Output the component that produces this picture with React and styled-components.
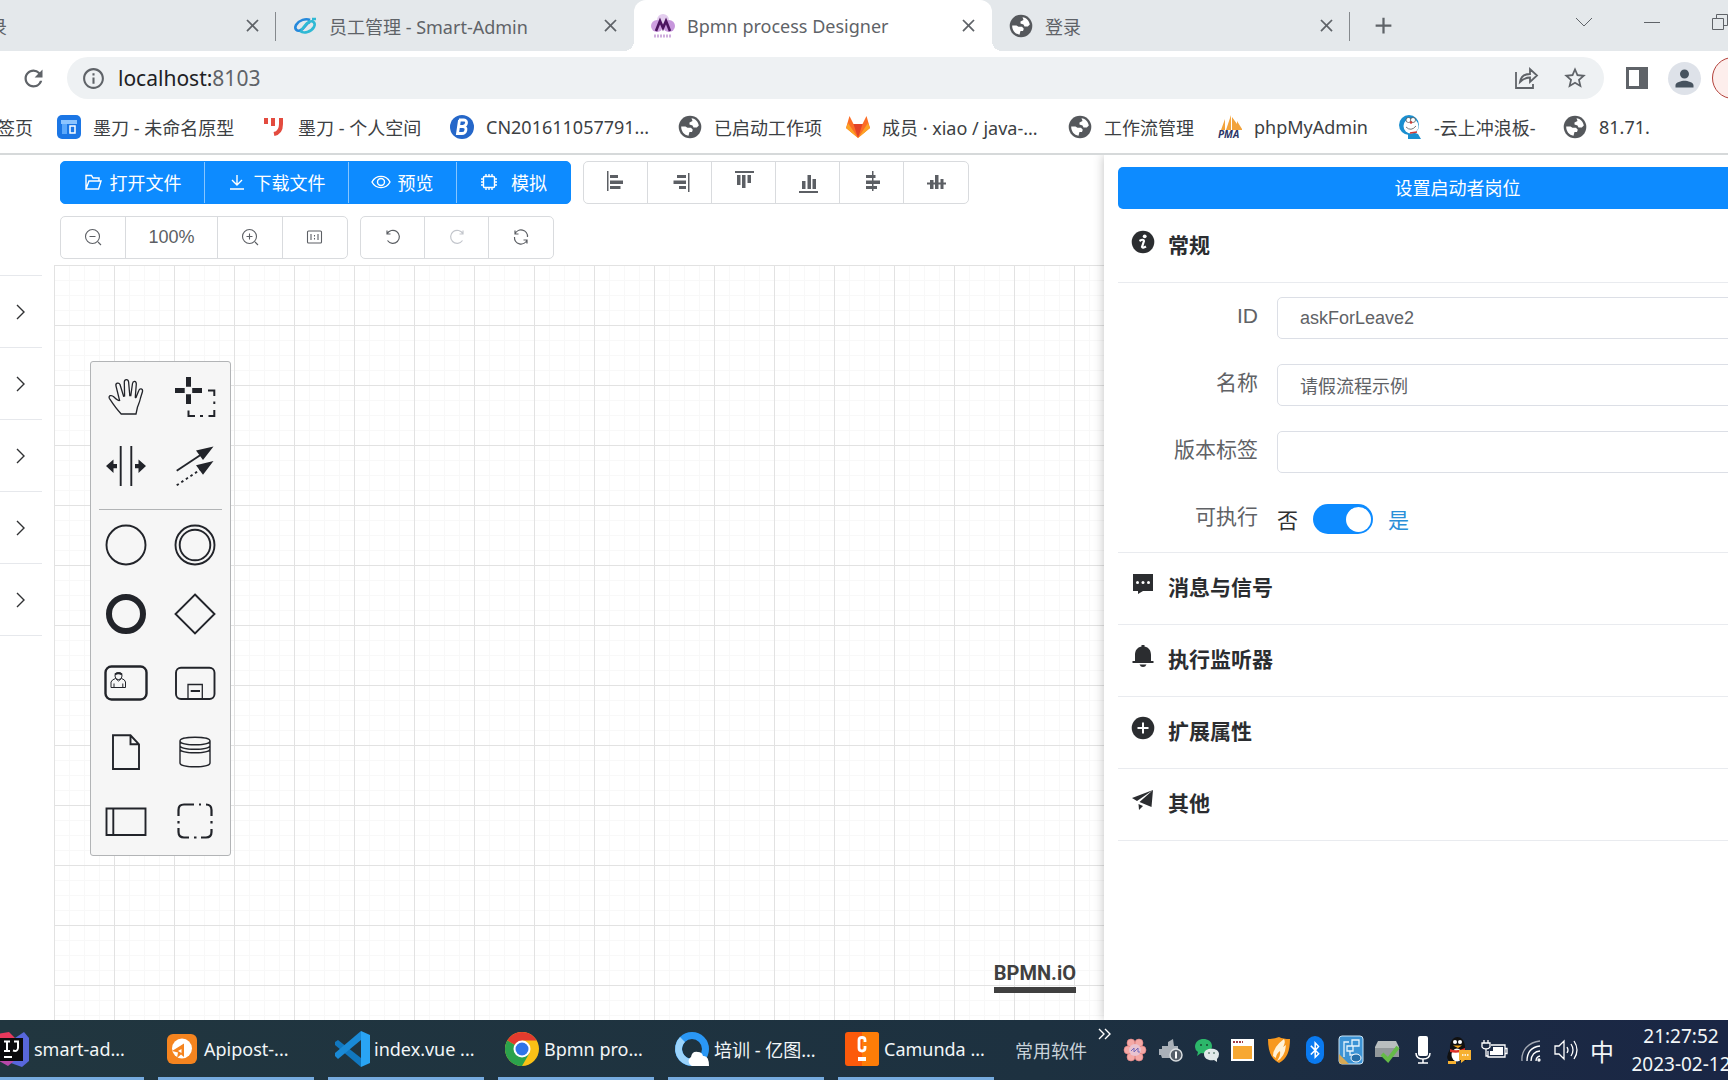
import React from "react";
import styled, { createGlobalStyle, css } from "styled-components";
import { MdAdd, MdClose, MdInfoOutline, MdPerson, MdRefresh, MdStarBorder } from "react-icons/md";
import { FaBluetoothB } from "react-icons/fa";

const blue = "#0d8bff";
const ink = "#22242a";

const GlobalStyle = createGlobalStyle`
    * {
        box-sizing: border-box;
    }

    body {
        margin: 0;
        background: #fff;
        overflow: hidden;
        font-family: "Noto Sans", "Noto Sans CJK SC", sans-serif;
        font-size: 18px;
    }

    button, input {
        font: inherit;
    }

    svg {
        display: block;
        flex: none;
        overflow: visible;
    }
`;

const Screen = styled.div`
    display: flex;
    flex-direction: column;
    height: 100vh;
    overflow: hidden;
`;

/* ---------- browser ---------- */

const TabStrip = styled.div`
    display: flex;
    flex: none;
    height: 51px;
    background: #e4e8eb;
    overflow: hidden;
`;

const Tabs = styled.div`
    display: flex;
    flex: none;
    margin-left: -82px;
`;

const Tab = styled.div`
    position: relative;
    display: flex;
    align-items: center;
    gap: 12px;
    width: 358px;
    padding: 0 13px 0 17px;
    color: #5f6368;
    background: ${(p) => (p.$active ? "#fff" : "transparent")};
    border-radius: 12px 12px 0 0;

    ${(p) =>
        p.$line &&
        css`
            &::after {
                content: "";
                position: absolute;
                right: 0;
                top: 12px;
                width: 1px;
                height: 29px;
                background: #85898d;
            }
        `}

    ${(p) =>
        p.$active &&
        css`
            &::before,
            &::after {
                content: "";
                position: absolute;
                bottom: 0;
                width: 10px;
                height: 10px;
            }
            &::before {
                left: -10px;
                background: radial-gradient(circle at 0 0, transparent 10px, #fff 10px);
            }
            &::after {
                right: -10px;
                background: radial-gradient(circle at 100% 0, transparent 10px, #fff 10px);
            }
        `}
`;

const TabTitle = styled.span`
    flex: 1;
    white-space: nowrap;
    overflow: hidden;
`;

const PlainButton = styled.button`
    display: flex;
    align-items: center;
    justify-content: center;
    padding: 0;
    border: 0;
    background: none;
    color: #5f6368;
`;

const NewTab = styled(PlainButton)`
    width: 66px;
`;

const WindowButtons = styled.div`
    display: flex;
    gap: 52px;
    margin-left: auto;
    padding-bottom: 8px;
    margin-right: 0;
`;

const AddressRow = styled.div`
    display: flex;
    align-items: center;
    flex: none;
    height: 54px;
    padding-left: 20px;
    overflow: hidden;
`;

const AddressBar = styled.div`
    display: flex;
    flex: 1;
    align-items: center;
    gap: 12px;
    height: 42px;
    margin: 0 22px 0 20px;
    padding: 0 16px 0 14px;
    border-radius: 21px;
    background: #eef1f3;
    color: #5f6368;
`;

const Url = styled.div`
    flex: 1;
    font-size: 21px;

    b {
        font-weight: 400;
        color: #202124;
    }
`;

const AddressActions = styled.div`
    display: flex;
    gap: 24px;
`;

const Avatar = styled(PlainButton)`
    width: 33px;
    height: 33px;
    margin: 0 11px 0 20px;
    border-radius: 50%;
    background: #dee2e9;
    color: #47535f;
`;

const UpdateButton = styled.button`
    width: 120px;
    height: 42px;
    margin-right: -104px;
    border: 1px solid #b3403a;
    border-radius: 21px;
    background: #fdeeec;
`;

const Bookmarks = styled.nav`
    display: flex;
    align-items: center;
    flex: none;
    height: 48px;
    padding-bottom: 4px;
    overflow: hidden;
`;

const Bookmark = styled.a`
    display: flex;
    align-items: center;
    gap: 12px;
    flex: none;
    width: ${(p) => p.$width}px;
    color: #3c4043;
    text-decoration: none;
    white-space: nowrap;

    &:first-child {
        justify-content: flex-end;
        padding-right: 24px;
        margin-left: -60px;
    }
`;

/* ---------- designer ---------- */

const Page = styled.main`
    display: flex;
    flex: 1;
    min-height: 0;
    border-top: 2px solid #d6d9da;
    font-family: "Liberation Sans", "Noto Sans CJK SC", sans-serif;
    overflow: hidden;
`;

const SideMenu = styled.aside`
    flex: none;
    width: 42px;
    margin-right: 12px;
    padding-top: 120px;
`;

const SideItem = styled.button`
    display: flex;
    align-items: center;
    justify-content: center;
    width: 100%;
    height: 72px;
    padding: 0;
    border: 0;
    border-top: 1px solid #e6e8ec;
    background: none;
    color: #303133;

    &:last-child {
        height: 73px;
        border-bottom: 1px solid #e6e8ec;
    }
`;

const Designer = styled.section`
    display: flex;
    flex-direction: column;
    flex: 1;
    min-width: 0;
`;

const Toolbar = styled.div`
    display: grid;
    gap: 12px;
    padding: 6px 0 6px 6px;
`;

const ToolRow = styled.div`
    display: flex;
    gap: 12px;
`;

const ButtonGroup = styled.div`
    display: flex;
    height: 43px;
    border: 1px solid ${(p) => (p.$primary ? blue : "#d9dbde")};
    border-radius: 5px;
    background: ${(p) => (p.$primary ? blue : "#fff")};
    overflow: hidden;
`;

const ToolButton = styled.button`
    display: flex;
    align-items: center;
    justify-content: center;
    gap: ${(p) => p.$gap || 8}px;
    width: ${(p) => p.$width || 65}px;
    padding: 0 0 1px;
    border: 0;
    border-right: 1px solid ${(p) => (p.$primary ? "#86c5ff" : "#d9dbde")};
    background: none;
    color: ${(p) => (p.$primary ? "#fff" : "#5c5f64")};

    &:last-child {
        border-right: 0;
    }

    &:disabled {
        color: #c3c6cc;
    }
`;

const Canvas = styled.div`
    position: relative;
    flex: 1;
    background-image: linear-gradient(#e2e2e2 1px, transparent 1px),
        linear-gradient(90deg, #e2e2e2 1px, transparent 1px),
        linear-gradient(#f8f8f8 1px, transparent 1px),
        linear-gradient(90deg, #f8f8f8 1px, transparent 1px);
    background-size: 60px 60px, 60px 60px, 15px 15px, 15px 15px;
`;

const Palette = styled.div`
    position: absolute;
    left: 36px;
    top: 96px;
    border: 1px solid #b2b4b6;
    border-radius: 3px;
    background: #f6f6f6;
`;

const PaletteGroup = styled.div`
    display: grid;
    grid-template-columns: 69px 70px;
    grid-auto-rows: 69px;
`;

const PaletteTool = styled(PlainButton)`
    color: ${ink};
`;

const PaletteLine = styled.hr`
    height: 1px;
    margin: 9px 8px 0;
    border: 0;
    background: #b2b4b6;
`;

const BpmnLogo = styled.a`
    position: absolute;
    right: 28px;
    bottom: 27px;
    border-bottom: 6px solid #404040;
    color: #404040;
    font: bold 20px/28px "Liberation Sans Narrow", "Roboto", sans-serif;
    text-decoration: none;
`;

const Panel = styled.aside`
    position: relative;
    flex: none;
    width: 624px;
    padding: 12px 0 0 14px;
    background: #fff;
    box-shadow: 0 0 10px rgba(0, 0, 0, 0.25);
`;

/* the panel runs on past the right edge of the window */
const PanelBody = styled.div`
    margin-right: -69px;
`;

const StarterButton = styled.button`
    display: block;
    width: 100%;
    height: 42px;
    margin-bottom: 2px;
    padding: 0 0 2px;
    border: 0;
    border-radius: 5px;
    background: ${blue};
    color: #fff;
`;

const SectionHead = styled.button`
    display: flex;
    align-items: center;
    gap: 13px;
    width: 100%;
    height: 72px;
    padding: 0 13px 5px;
    border: 0;
    border-bottom: 1px solid #e9ebef;
    background: none;
    color: #2b2d30;
    font-size: 21px;
    font-weight: 700;

    svg {
        margin-bottom: 4px;
    }
`;

const Fields = styled.div`
    display: grid;
    gap: 25px;
    padding: 14px 0 12px;
    border-bottom: 1px solid #e9ebef;
`;

const Field = styled.div`
    display: grid;
    grid-template-columns: 140px 1fr;
    align-items: center;
    gap: 19px;
    height: 42px;
    color: #606266;
`;

const FieldLabel = styled.label`
    padding-bottom: 4px;
    text-align: right;
    font-size: 21px;
    line-height: 38px;
`;

const TextInput = styled.input`
    width: 100%;
    height: 42px;
    padding: 0 22px;
    border: 1px solid #dcdfe6;
    border-radius: 5px;
    color: #606266;
`;

const SwitchRow = styled.div`
    display: flex;
    align-items: center;
    gap: 15px;
    font-size: 21px;
    color: #303133;

    em {
        font-style: normal;
        color: #2a8fd8;
    }
`;

const Switch = styled.input`
    appearance: none;
    display: flex;
    align-items: center;
    width: 60px;
    height: 30px;
    margin: 0;
    padding: 0 2px;
    border-radius: 15px;
    background: ${blue};

    &::after {
        content: "";
        width: 25px;
        height: 25px;
        margin-left: auto;
        border-radius: 50%;
        background: #fff;
    }
`;

/* ---------- taskbar ---------- */

const Taskbar = styled.footer`
    display: flex;
    flex: none;
    height: 60px;
    background: linear-gradient(90deg, #21363f, #1d3140 60%, #1a2645);
    color: #f2f6f8;
    overflow: hidden;
`;

const TaskList = styled.div`
    display: flex;
    gap: 14px;
    margin-left: -12px;
`;

const Task = styled.button`
    display: flex;
    align-items: center;
    gap: 4px;
    width: 156px;
    padding: 0 0 0 6px;
    border: 0;
    border-bottom: 3px solid #76abdf;
    background: none;
    color: inherit;
    white-space: nowrap;
`;

const Software = styled.div`
    display: flex;
    align-items: center;
    gap: 12px;
    margin-left: 21px;
    color: #c9d3da;

    svg {
        margin-bottom: 32px;
    }
`;

const Tray = styled.div`
    display: flex;
    align-items: center;
    gap: 10px;
    margin-left: auto;
`;

const Ime = styled.span`
    width: 24px;
    font-size: 24px;
    text-align: center;
`;

const Clock = styled.time`
    width: 114px;
    margin-right: -10px;
    text-align: center;
    font-size: 19px;
    line-height: 28px;
    white-space: nowrap;
`;

const Icon = ({ size = 24, box = size, children, ...rest }) => (
    <svg width={size} height={size} viewBox={`0 0 ${box} ${box}`} fill="none" {...rest}>
        {children}
    </svg>
);

const Line = (props) => <Icon stroke="currentColor" strokeWidth="1.4" {...props} />;

/* favicons */

const AdminMark = () => (
    <Icon strokeWidth="2.6">
        <path
            d="M17 6C13 4 6 6 3 11C1 15 4 18 8 16C12 14 13 9 17 8"
            stroke="#2589dc"
        />
        <path
            d="M7 17C11 20 18 18 21 13C23 9 20 6 16 8C12 10 11 14 8 16M19 5L23 5"
            stroke="#2fb9d4"
        />
    </Icon>
);

const PurpleMark = () => (
    <Icon>
        <circle cx="12" cy="6" r="6" fill="#e3cdee" />
        <circle cx="6" cy="12" r="6" fill="#cfa0e0" />
        <circle cx="18" cy="12" r="6" fill="#c796dc" />
        <path d="M5 17L9 7L12 14L15 7L19 17" stroke="#4c145f" strokeWidth="2.6" />
        <path d="M3 22H21" stroke="#cfaedd" strokeWidth="3" strokeDasharray="2 1" />
    </Icon>
);

const ModaoApp = () => (
    <Icon>
        <rect width="24" height="24" rx="5" fill="#1b76e5" />
        <path d="M4 5H20V9H4Z" fill="#8cc4ff" />
        <path d="M5 9H10V19H5Z" fill="#5ba8fb" />
        <path d="M13 11H18V18H13Z" stroke="#fff" strokeWidth="1.5" />
    </Icon>
);

const ModaoRed = () => (
    <Icon stroke="#e34b3f" strokeWidth="4">
        <path d="M4 3V9M11 3V11M19 3V9C19 15 17 18 12 19" />
    </Icon>
);

const BlueB = () => (
    <Icon>
        <circle cx="12" cy="12" r="12" fill="#2567c9" />
        <path
            d="M9 5H14C18 5 17 11 13 11.5H9M13 11.5C18 12 16 18.5 12 18.5H7.5L9.5 5"
            stroke="#fff"
            strokeWidth="2.8"
        />
    </Icon>
);

const Gitlab = () => (
    <Icon>
        <path d="M12 23L0 13L3.5 1L7.5 9H16.5L20.5 1L24 13Z" fill="#fc6d26" />
        <path d="M12 23L7.5 9H16.5Z" fill="#e24329" />
        <path d="M0 13L2 8L12 23ZM24 13L22 8L12 23Z" fill="#fca326" />
    </Icon>
);

const Pma = () => (
    <Icon>
        <path d="M3 15L7 4V15ZM8 15L13 0V15ZM14 15V2L19 9V15ZM19 15V6L24 14V15Z" fill="#f2a33c" />
        <text x="0" y="23" fontSize="10" fontWeight="700" fontStyle="italic" fill="#2b3567">
            PMA
        </text>
    </Icon>
);

const Doraemon = () => (
    <Icon>
        <circle cx="11" cy="10" r="10" fill="#1a8fd0" />
        <path d="M10 19Q14 16 20 19L23 24H10Z" fill="#1a8fd0" />
        <circle cx="13" cy="11" r="7.5" fill="#fff" />
        <circle cx="10.500" cy="5" r="2.5" fill="#fff" stroke="#333" strokeWidth=".6" />
        <circle cx="15" cy="5" r="2.5" fill="#fff" stroke="#333" strokeWidth=".6" />
        <circle cx="13" cy="7.5" r="1.3" fill="#d23b34" />
        <path d="M8 12Q13 17 18 11" stroke="#555" strokeWidth=".8" />
        <path d="M12 18L19 17" stroke="#d23b34" strokeWidth="1.5" />
    </Icon>
);

const Globe = () => (
    <Icon>
        <circle cx="12" cy="12" r="11.3" fill="#55585c" />
        <path
            d="M13.5 3.2C17.5 3.8 20.3 6.8 20.8 10.6L18.8 12.5H15.5L14.5 10.5L11.5 9.5V7.5L14.5 6Z"
            fill="#fff"
        />
        <path
            d="M3.2 11.5H7.5L9.5 12.8H13L14.8 14.8L14 17H11.5L10.5 20.7C6.2 20 3 16.300 3.2 11.5Z"
            fill="#fff"
        />
    </Icon>
);

const ShareIcon = () => (
    <Line strokeWidth="1.8">
        <path d="M2 6V22H19V18M6 16C7 10 11 8 16 8V3L23 9.500L16 16V11.500C11 11.500 9 13 6 16Z" />
    </Line>
);

const tabs = [
    { title: "登录", icon: <Globe />, line: true },
    { title: "员工管理 - Smart-Admin", icon: <AdminMark /> },
    { title: "Bpmn process Designer", icon: <PurpleMark />, active: true },
    { title: "登录", icon: <Globe />, line: true },
];

const bookmarks = [
    { title: "新标签页", width: 117 },
    { title: "墨刀 - 未命名原型", icon: <ModaoApp />, width: 205 },
    { title: "墨刀 - 个人空间", icon: <ModaoRed />, width: 188 },
    { title: "CN201611057791...", icon: <BlueB />, width: 228 },
    { title: "已启动工作项", icon: <Globe />, width: 168 },
    { title: "成员 · xiao / java-...", icon: <Gitlab />, width: 222 },
    { title: "工作流管理", icon: <Globe />, width: 150 },
    { title: "phpMyAdmin", icon: <Pma />, width: 180 },
    { title: "-云上冲浪板-", icon: <Doraemon />, width: 165 },
    { title: "81.71.", icon: <Globe />, width: 120 },
];

/* toolbar */

const FolderIcon = () => (
    <Line size={18}>
        <path d="M2 16V2.500H7.500L9 5H15V8M2 16L5 8H17L14.500 16Z" />
    </Line>
);

const DownloadIcon = () => (
    <Line size={18}>
        <path d="M9 2V12M4 7L9 12L14 7M2 16H16" />
    </Line>
);

const EyeIcon = () => (
    <Line size={18}>
        <path d="M0 9C4 1.500 14 1.500 18 9C14 16.500 4 16.500 0 9Z" />
        <circle cx="9" cy="9" r="3.5" />
    </Line>
);

const ChipIcon = () => (
    <Line size={18}>
        <rect x="3.5" y="3.5" width="11" height="11" rx="1" />
        <path d="M6 1V3M9 1V3M12 1V3M6 15V17M9 15V17M12 15V17M1 6H3M1 9H3M1 12H3M15 6H17M15 9H17M15 12H17" />
    </Line>
);

const fileActions = [
    { title: "打开文件", icon: <FolderIcon />, width: 144 },
    { title: "下载文件", icon: <DownloadIcon />, width: 144 },
    { title: "预览", icon: <EyeIcon />, width: 108 },
    { title: "模拟", icon: <ChipIcon />, width: 113, gap: 13 },
];

const alignIcons = [
    { title: "向左对齐", d: "M3 1H4.5V21H3ZM6 5H14V8H6ZM6 10.500H19V14H6ZM6 16H16.500V19H6Z" },
    { title: "向右对齐", d: "M20 3H21.500V22H20ZM9 5H18V8H9ZM5.500 10.500H18V14H5.500ZM11 16H18V19H11Z" },
    { title: "向上对齐", d: "M3 1H22V3H3ZM5 5H8.500V15H5ZM10 5H13.500V18H10ZM15.500 5H19V13H15.500Z" },
    { title: "向下对齐", d: "M3 21H22V23H3ZM6 11H9.500V19H6ZM11.500 5H15V19H11.500ZM16.500 9H20V19H16.500Z" },
    { title: "水平居中", d: "M12 1H13.500V21H12ZM6 5H15.500V8H6ZM6 10.500H20V14H6ZM6 16H17V19H6Z" },
    { title: "垂直居中", d: "M3 12.500H22V14.500H3ZM6 10H9.500V19H6ZM11 5H14.500V19H11ZM16.500 9H19.500V19H16.500Z" },
];

const ZoomOutIcon = () => (
    <Line size={18} strokeWidth="1.1">
        <circle cx="8.5" cy="8.5" r="7" />
        <path d="M5.500 8.500H11.500M14 14L17 17" />
    </Line>
);

const ZoomInIcon = () => (
    <Line size={18} strokeWidth="1.1">
        <circle cx="8.5" cy="8.5" r="7" />
        <path d="M5.500 8.500H11.500M8.500 5.500V11.500M14 14L17 17" />
    </Line>
);

const FitIcon = () => (
    <Line size={18} strokeWidth="1.1">
        <rect x="1.5" y="3" width="14" height="12" rx="1" />
        <path d="M5 6V12M12 6V12M8.500 7V8.500M8.500 10V11.500" />
    </Line>
);

const UndoIcon = () => (
    <Line size={18} strokeWidth="1.2">
        <path d="M3 2.500V6H6.500M3 6A6.500 6.500 0 1 1 3.500 12.500" />
    </Line>
);

const RedoIcon = () => (
    <Line size={18} strokeWidth="1.2">
        <path d="M15 2.500V6H11.500M15 6A6.500 6.500 0 1 0 14.500 12.500" />
    </Line>
);

const ResetIcon = () => (
    <Line size={18} strokeWidth="1.2">
        <path d="M3 2.500V6H6.500M3 6A6.500 6.500 0 0 1 15.500 9M15 15.500V12H11.500M15 12A6.500 6.500 0 0 1 2.500 9" />
    </Line>
);

/* palette, every glyph in a 40 x 40 box */

const moveTools = [
    {
        title: "手型工具",
        glyph: (
            <path
                strokeWidth="1.3"
                d="M15.200 37H30L31.500 30C33 26 34 24 34.500 21L36.500 14.500C37 11.500 33.800 10.800 32.800 13.500L30 20.500Q29.200 21 29.300 20L30.300 7C30.300 3.500 27 3.500 26.500 6.500L24.800 18.500H23.800L22.600 5C22.300 1.800 18.500 1.800 18.300 5L18.600 19L17.600 19.200L14 7.500C12.800 5 9.200 6 10 9L13.600 23.500C12 24 10 22 8 20C5.500 17.500 2 18.500 3.400 21.500C6 25.500 9.500 31 15.200 37Z"
            />
        ),
    },
    {
        title: "套索工具",
        glyph: (
            <>
                <path strokeWidth="5" d="M13.500 0V9.700M13.500 17.200V27M0 13.500H9.700M17.200 13.500H27" />
                <path
                    strokeWidth="2"
                    d="M33 13.500H39.300V19M39.300 24.500V27M39.300 33V39H33.500M25 39H28M20 39H13.500V33.500"
                />
            </>
        ),
    },
    {
        title: "空间工具",
        glyph: (
            <>
                <path d="M14.700 0V40M25.300 0V40" />
                <path
                    fill={ink}
                    stroke="none"
                    d="M0 20L7.500 13.500V18H11V22.300H7.500V27ZM40 20L32.500 13.500V18H29V22.300H32.500V27Z"
                />
            </>
        ),
    },
    {
        title: "连接工具",
        glyph: (
            <>
                <path d="M1.700 24.700L27 8" />
                <path strokeDasharray="2.500 3" d="M1.700 39.300L27 22.500" />
                <path
                    fill={ink}
                    stroke="none"
                    d="M38.500 0.500L21 4.500L28 14ZM38.500 15L21 19.200L28 28.700Z"
                />
            </>
        ),
    },
];

const shapeTools = [
    { title: "开始事件", glyph: <circle cx="20" cy="20" r="19.5" /> },
    {
        title: "中间事件",
        glyph: (
            <>
                <circle cx="20" cy="20" r="19.5" />
                <circle cx="20" cy="20" r="15.3" />
            </>
        ),
    },
    { title: "结束事件", glyph: <circle cx="20" cy="20" r="17" strokeWidth="6" /> },
    { title: "网关", glyph: <path d="M20 0.500L39.500 20L20 39.500L0.500 20Z" /> },
    {
        title: "用户任务",
        glyph: (
            <>
                <rect x="-0.5" y="3.5" width="41" height="33" rx="6" strokeWidth="2.4" />
                <path
                    strokeWidth="1"
                    d="M5 24.500V19Q6 16.500 9.500 15.500L12.500 18L15.500 15.500Q19 16.500 19.500 19V24.500ZM8 24V20.500M16.800 24V20.500M9 12Q9 16.500 12.500 16.500T16 12Q16 9.500 12.500 9.500T9 12"
                />
                <path strokeWidth="2" d="M9 11.500Q12 9 16 11.500" />
            </>
        ),
    },
    {
        title: "子流程",
        glyph: (
            <>
                <rect x="1" y="4.7" width="38.5" height="31.3" rx="5" />
                <path strokeWidth="1.300" d="M13 36V21.500H27.300V36" />
                <path strokeWidth="2" d="M15.700 28H25" />
            </>
        ),
    },
    { title: "数据对象", glyph: <path d="M7 3.300H24.500L33 12.300V37H7ZM24.500 3.300V12.300H33" /> },
    {
        title: "数据存储",
        glyph: (
            <path
                strokeWidth="1.4"
                d="M5 9V31C5 36 35 36 35 31V9C35 4 5 4 5 9C5 14 35 14 35 9M5 13.500C5 18.500 35 18.500 35 13.500M5 17C5 22 35 22 35 17"
            />
        ),
    },
    { title: "泳道", glyph: <path d="M0.500 7.500H39.500V34H0.500ZM7.300 7.500V34" /> },
    {
        title: "分组",
        glyph: (
            <path
                strokeWidth="2.200"
                d="M13 3.500H19M24 3.500H26M31 3.500Q36.500 3.500 36.500 9V15M36.500 20V22.500M36.500 28V31Q36.500 36.500 31 36.500H26M21.500 36.500H19M14 36.500H9Q3.500 36.500 3.500 31V27M3.500 22.500V20M3.500 15V9Q3.500 3.500 9 3.500H13"
            />
        ),
    },
];

/* panel sections */

const SectionIcon = ({ children }) => <Icon fill="#2b2d30">{children}</Icon>;

const InfoIcon = () => (
    <SectionIcon>
        <circle cx="12" cy="12" r="11.3" />
        <circle cx="13.7" cy="6.3" r="1.9" fill="#fff" />
        <path
            d="M8.500 11Q12.500 8.500 13 11L11 17Q11.500 18.500 15 16.500"
            stroke="#fff"
            strokeWidth="2.2"
            fill="none"
        />
    </SectionIcon>
);

const sections = [
    {
        title: "消息与信号",
        icon: (
            <SectionIcon>
                <path d="M2 2H22V19H12L7 22V19H2Z" />
                <g fill="#fff">
                    <circle cx="6.5" cy="10.5" r="1.5" />
                    <circle cx="12" cy="10.5" r="1.5" />
                    <circle cx="17.5" cy="10.5" r="1.5" />
                </g>
            </SectionIcon>
        ),
    },
    {
        title: "执行监听器",
        icon: (
            <SectionIcon>
                <path d="M10.500 1H13.500V2.500C18 3.500 20 6.500 20 11V17H22.500V19H1.500V17H4V11C4 6.500 6 3.500 10.500 2.500ZM8.500 20.500H15.500Q14.500 23 12 23T8.500 20.500Z" />
            </SectionIcon>
        ),
    },
    {
        title: "扩展属性",
        icon: (
            <SectionIcon>
                <circle cx="12" cy="12" r="11.3" />
                <path d="M12 6.500V17.500M6.500 12H17.500" stroke="#fff" strokeWidth="2" />
            </SectionIcon>
        ),
    },
    {
        title: "其他",
        icon: (
            <SectionIcon>
                <path d="M1 10L22 2L6 13ZM8.500 14L22 2L20.500 19ZM7.500 16L12 18L8 22Z" />
            </SectionIcon>
        ),
    },
];

/* taskbar */

const Idea = () => (
    <Icon size={36}>
        <path d="M3 3L15 1L22 8L16 33L3 26Z" fill="#e7385c" />
        <path d="M21 7L30 1L35 7L35 30L28 36L14 31Z" fill="#5867dc" />
        <path d="M5 30H20L14 35Z" fill="#b749a9" />
        <rect x="5" y="7" width="24" height="23" fill="#0b0b0d" />
        <path
            d="M10 10.500H16M13 10.500V20M10 20H16M20 10.500H25M24 10.500V17Q23.500 21 19 19.500M10 26H18"
            stroke="#fff"
            strokeWidth="2"
        />
    </Icon>
);

const Apipost = () => (
    <Icon size={36}>
        <rect x="3" y="3" width="30" height="30" rx="6" fill="#f5841f" />
        <circle cx="18" cy="17.5" r="10" fill="#fff" />
        <path d="M8 20L20 12.500V26L17 23.500L13 27L14 21.500Z" fill="#f5841f" />
        <path d="M14 20L17.500 18V22Z" fill="#fff" />
    </Icon>
);

const VsCode = () => (
    <Icon size={36}>
        <path d="M27 0L36 4V32L27 36Z" fill="#29a4f4" />
        <path d="M1 11L4 9L27 27V36L1 14Z" fill="#1177bf" />
        <path d="M1 25L4 28L27 9V0L1 22Z" fill="#1a8ad6" />
    </Icon>
);

const Chrome = () => (
    <Icon size={36}>
        <circle cx="18" cy="18" r="17" fill="#fbc116" />
        <path d="M18 18L3.300 9.500A17 17 0 0 1 32.700 9.500H18Z" fill="#e33b2e" />
        <path d="M18 18L3.300 9.500A17 17 0 0 0 18 35L25.400 22.300Z" fill="#2ba24c" />
        <circle cx="18" cy="18" r="8.5" fill="#fff" />
        <circle cx="18" cy="18" r="6.5" fill="#2f74e8" />
    </Icon>
);

const QBrowser = () => (
    <Icon size={36}>
        <circle cx="18" cy="18" r="13.5" stroke="#2a97f5" strokeWidth="7" />
        <path d="M8.500 8.500A13.500 13.500 0 0 0 18 31.500" stroke="#9bd3fb" strokeWidth="7" />
        <path d="M18 35A5 5 0 0 1 17 26Q18 20 24 21Q28 21 29 25Q35 24 35 35Z" fill="#fff" />
    </Icon>
);

const Camunda = () => (
    <Icon size={36}>
        <rect x="1" y="1" width="34" height="34" rx="3" fill="#fc5a0b" />
        <path d="M18 1H32Q35 1 35 4V32Q35 35 32 35H18Z" fill="#fd7d08" />
        <path
            d="M21 11V9Q21 6.500 18 6.500T15 9V17Q15 20 18 20T21 17V15"
            stroke="#fff"
            strokeWidth="2.8"
        />
        <path d="M14 26H22V30H14Z" fill="#fff" />
    </Icon>
);

const tasks = [
    { title: "smart-ad...", icon: <Idea /> },
    { title: "Apipost-...", icon: <Apipost /> },
    { title: "index.vue ...", icon: <VsCode /> },
    { title: "Bpmn pro...", icon: <Chrome /> },
    { title: "培训 - 亿图...", icon: <QBrowser /> },
    { title: "Camunda ...", icon: <Camunda /> },
];

const TrayIcon = (props) => <Icon size={26} box={26} {...props} />;

const TrayIcons = () => (
    <>
        <TrayIcon>
            <g fill="#f4a9a6" stroke="#e77f80" strokeWidth=".6">
                <circle cx="9" cy="6" r="4" />
                <circle cx="17" cy="6" r="4" />
                <circle cx="20" cy="13" r="4" />
                <circle cx="17" cy="20" r="4" />
                <circle cx="9" cy="20" r="4" />
                <circle cx="6" cy="13" r="4" />
            </g>
            <circle cx="13" cy="13" r="6" fill="#e9c3d0" />
            <path d="M9 14L12 11V15L16 11V15H18" stroke="#7469b9" />
        </TrayIcon>
        <TrayIcon>
            <path d="M1 12H4V9H10V5L15 2L16 9H20V21H4L3 18H1Z" fill="#a9b0b8" />
            <circle cx="18" cy="18" r="6" fill="#555e68" stroke="#d9dde0" strokeWidth="1.5" />
            <path d="M18 14.500V21.500" stroke="#fff" strokeWidth="2" />
        </TrayIcon>
        <TrayIcon>
            <path d="M1 10C1 -1 18 0 18 9C18 16 10 17 7 16L3 19L4 15Q1 13 1 10Z" fill="#2cb76a" />
            <path d="M10 17C10 10 25 10 25 17Q25 20 23 22V25L20 23C15 24 10 22 10 17Z" fill="#e1e8e8" />
            <g fill="#174a32">
                <circle cx="7" cy="8" r="1" />
                <circle cx="13" cy="8" r="1" />
                <circle cx="15" cy="16" r=".8" />
                <circle cx="20" cy="16" r=".8" />
            </g>
        </TrayIcon>
        <TrayIcon>
            <path d="M1 2H24V24H1Z" fill="#fff" />
            <path d="M3 9H22V22H3Z" fill="#f7a832" />
            <path d="M3 5H13" stroke="#a33e48" strokeWidth="2" strokeDasharray="2 1" />
        </TrayIcon>
        <TrayIcon>
            <path d="M2 2Q9 2 13 0Q17 2 24 2C24 14 21 22 13 26C5 22 2 14 2 2Z" fill="#f7981e" />
            <path d="M7 19Q7 10 18 2Q20 5 17 10L20 8Q19 20 11 24Q15 18 14 14Q10 17 10 21Z" fill="#fff2d8" />
        </TrayIcon>
        <TrayIcon>
            <rect x="4" y="-1" width="18" height="28" rx="9" fill="#0a7af0" />
            <g color="#fff">
                <FaBluetoothB x={4} y={4} size={18} />
            </g>
        </TrayIcon>
        <TrayIcon>
            <rect x="1" y="-1" width="24" height="28" rx="3" fill="#3c93d5" stroke="#c9e4f6" />
            <path d="M6 20V5H11M14 3H21V9H14ZM9 9H15V14H9ZM12 14V18H18" stroke="#e6f4fc" strokeWidth="1.3" />
            <ellipse cx="18" cy="21" rx="5" ry="4" fill="#276fa9" stroke="#fff" />
            <path d="M1 17L11 27H4Q1 27 1 24Z" fill="#d7a955" />
        </TrayIcon>
        <TrayIcon>
            <path d="M1 10L4 4H22L25 10V20H1Z" fill="#b9bebf" />
            <path d="M1 11H25V20H1Z" fill="#92989a" />
            <path d="M8 17L14 23L24 10" stroke="#65bb48" strokeWidth="4" />
        </TrayIcon>
        <TrayIcon>
            <rect x="8" y="-1" width="10" height="20" rx="2" fill="#fff" />
            <path d="M6 16Q6 22 13 22T20 16M13 22V26M8 26H18" stroke="#fff" strokeWidth="1.5" />
        </TrayIcon>
        <TrayIcon>
            <path d="M3 24Q-1 21 4 12C3 -4 20 -4 19 12Q22 17 20 24Z" fill="#111" />
            <ellipse cx="11" cy="18" rx="5.5" ry="6.5" fill="#fff" />
            <circle cx="9" cy="5" r="2" fill="#fff" />
            <circle cx="14" cy="5" r="2" fill="#fff" />
            <path d="M7 8.500H16L12 11Z" fill="#f4a61b" />
            <path d="M4 12Q11 15 19 11V14Q11 17 4 15Z" fill="#db3027" />
            <path d="M2 24H10V27H2ZM13 13H25V23H19L15 26V23H13Z" fill="#f7b131" />
            <path d="M16 18H23" stroke="#fff" strokeWidth="1.5" strokeDasharray="1.5 1" />
        </TrayIcon>
        <TrayIcon stroke="#fff" strokeWidth="1.3">
            <path d="M2 3V6M6 3V6M0 6H8V10Q7 12 4 12T0 10ZM4 12V19H6" />
            <path d="M9 8H23V20H6V14M23 11.500H25V16.500H23" />
            <path d="M11 10H21V18H8V14H11Z" fill="#fff" stroke="none" />
        </TrayIcon>
        <TrayIcon stroke="#fff" strokeWidth="1.3">
            <path d="M4 24C3 13 11 5 22 4" opacity=".6" />
            <path d="M9 24C9 15 14 10 22 9M13 24C13 18 17 14 22 14M18 24Q18 20 22 19" />
            <circle cx="21" cy="23" r="1" fill="#fff" />
        </TrayIcon>
        <TrayIcon stroke="#fff" strokeWidth="1.3">
            <path d="M1 9H5L10 4V22L5 17H1ZM13 10Q15 13 13 16M17 7Q21 13 17 19M20 4Q26 13 20 22" />
        </TrayIcon>
    </>
);

const BrowserChrome = () => (
    <>
        <TabStrip>
            <Tabs>
                {tabs.map((tab, i) => (
                    <Tab key={i} $active={tab.active} $line={tab.line}>
                        {tab.icon}
                        <TabTitle>{tab.title}</TabTitle>
                        <PlainButton aria-label="关闭标签页">
                            <MdClose size={21} />
                        </PlainButton>
                    </Tab>
                ))}
            </Tabs>
            <NewTab aria-label="新建标签页">
                <MdAdd size={27} />
            </NewTab>
            <WindowButtons>
                <PlainButton aria-label="搜索标签页">
                    <Line size={16} strokeWidth="1">
                        <path d="M0 4L8 12L16 4" />
                    </Line>
                </PlainButton>
                <PlainButton aria-label="最小化">
                    <Line size={16} strokeWidth="1">
                        <path d="M0 8.500H16" />
                    </Line>
                </PlainButton>
                <PlainButton aria-label="还原">
                    <Line size={16} strokeWidth="1">
                        <path d="M0.500 4.500H11.500V15.500H0.500ZM4.500 4.500V0.500H15.500V11.500H11.500" />
                    </Line>
                </PlainButton>
            </WindowButtons>
        </TabStrip>
        <AddressRow>
            <PlainButton aria-label="重新加载">
                <MdRefresh size={27} />
            </PlainButton>
            <AddressBar>
                <MdInfoOutline size={25} />
                <Url>
                    <b>localhost:</b>8103
                </Url>
                <AddressActions>
                    <PlainButton aria-label="分享">
                        <ShareIcon />
                    </PlainButton>
                    <PlainButton aria-label="收藏">
                        <MdStarBorder size={26} />
                    </PlainButton>
                </AddressActions>
            </AddressBar>
            <PlainButton aria-label="侧边栏">
                <Icon size={22}>
                    <path d="M0 0H22V22H0ZM3 3V19H13V3Z" fill="#5f6368" fillRule="evenodd" />
                </Icon>
            </PlainButton>
            <Avatar aria-label="用户">
                <MdPerson size={27} />
            </Avatar>
            <UpdateButton aria-label="更新" />
        </AddressRow>
        <Bookmarks>
            {bookmarks.map((item) => (
                <Bookmark key={item.title} href="#" $width={item.width}>
                    {item.icon}
                    {item.title}
                </Bookmark>
            ))}
        </Bookmarks>
    </>
);

const PaletteButtons = ({ tools }) => (
    <PaletteGroup>
        {tools.map((tool) => (
            <PaletteTool key={tool.title} aria-label={tool.title}>
                <Line size={40} strokeWidth="1.9">
                    {tool.glyph}
                </Line>
            </PaletteTool>
        ))}
    </PaletteGroup>
);

const App = () => {
    return (
        <Screen>
            <GlobalStyle />
            <BrowserChrome />
            <Page>
                <SideMenu>
                    {[1, 2, 3, 4, 5].map((n) => (
                        <SideItem key={n} aria-label={`展开菜单 ${n}`}>
                            <Line size={16}>
                                <path d="M4 1L11 8L4 15" />
                            </Line>
                        </SideItem>
                    ))}
                </SideMenu>
                <Designer>
                    <Toolbar>
                        <ToolRow>
                            <ButtonGroup $primary>
                                {fileActions.map((item) => (
                                    <ToolButton key={item.title} $primary $width={item.width} $gap={item.gap}>
                                        {item.icon}
                                        {item.title}
                                    </ToolButton>
                                ))}
                            </ButtonGroup>
                            <ButtonGroup>
                                {alignIcons.map((item) => (
                                    <ToolButton key={item.title} $width={64} aria-label={item.title}>
                                        <Icon>
                                            <path d={item.d} fill="#5c5f64" />
                                        </Icon>
                                    </ToolButton>
                                ))}
                            </ButtonGroup>
                        </ToolRow>
                        <ToolRow>
                            <ButtonGroup>
                                <ToolButton aria-label="缩小">
                                    <ZoomOutIcon />
                                </ToolButton>
                                <ToolButton $width={92}>100%</ToolButton>
                                <ToolButton aria-label="放大">
                                    <ZoomInIcon />
                                </ToolButton>
                                <ToolButton $width={64} aria-label="适应画布">
                                    <FitIcon />
                                </ToolButton>
                            </ButtonGroup>
                            <ButtonGroup>
                                <ToolButton $width={64} aria-label="撤销">
                                    <UndoIcon />
                                </ToolButton>
                                <ToolButton $width={64} aria-label="恢复" disabled>
                                    <RedoIcon />
                                </ToolButton>
                                <ToolButton $width={64} aria-label="重新绘制">
                                    <ResetIcon />
                                </ToolButton>
                            </ButtonGroup>
                        </ToolRow>
                    </Toolbar>
                    <Canvas>
                        <Palette>
                            <PaletteButtons tools={moveTools} />
                            <PaletteLine />
                            <PaletteButtons tools={shapeTools} />
                        </Palette>
                        <BpmnLogo href="#">BPMN.iO</BpmnLogo>
                    </Canvas>
                </Designer>
                <Panel>
                    <PanelBody>
                        <StarterButton>设置启动者岗位</StarterButton>
                        <SectionHead>
                            <InfoIcon />
                            常规
                        </SectionHead>
                        <Fields>
                            <Field>
                                <FieldLabel htmlFor="process-id">ID</FieldLabel>
                                <TextInput id="process-id" defaultValue="askForLeave2" />
                            </Field>
                            <Field>
                                <FieldLabel htmlFor="process-name">名称</FieldLabel>
                                <TextInput id="process-name" defaultValue="请假流程示例" />
                            </Field>
                            <Field>
                                <FieldLabel htmlFor="process-version">版本标签</FieldLabel>
                                <TextInput id="process-version" />
                            </Field>
                            <Field>
                                <FieldLabel htmlFor="process-run">可执行</FieldLabel>
                                <SwitchRow>
                                    否
                                    <Switch id="process-run" type="checkbox" role="switch" defaultChecked />
                                    <em>是</em>
                                </SwitchRow>
                            </Field>
                        </Fields>
                        {sections.map((item) => (
                            <SectionHead key={item.title}>
                                {item.icon}
                                {item.title}
                            </SectionHead>
                        ))}
                    </PanelBody>
                </Panel>
            </Page>
            <Taskbar>
                <TaskList>
                    {tasks.map((item) => (
                        <Task key={item.title}>
                            {item.icon}
                            {item.title}
                        </Task>
                    ))}
                </TaskList>
                <Software>
                    常用软件
                    <Line size={12} stroke="#fff">
                        <path d="M0 1L5 6L0 11M6 1L11 6L6 11" />
                    </Line>
                </Software>
                <Tray>
                    <TrayIcons />
                    <Ime>中</Ime>
                    <Clock>
                        21:27:52
                        <br />
                        2023-02-12
                    </Clock>
                </Tray>
            </Taskbar>
        </Screen>
    );
};

export default App;
